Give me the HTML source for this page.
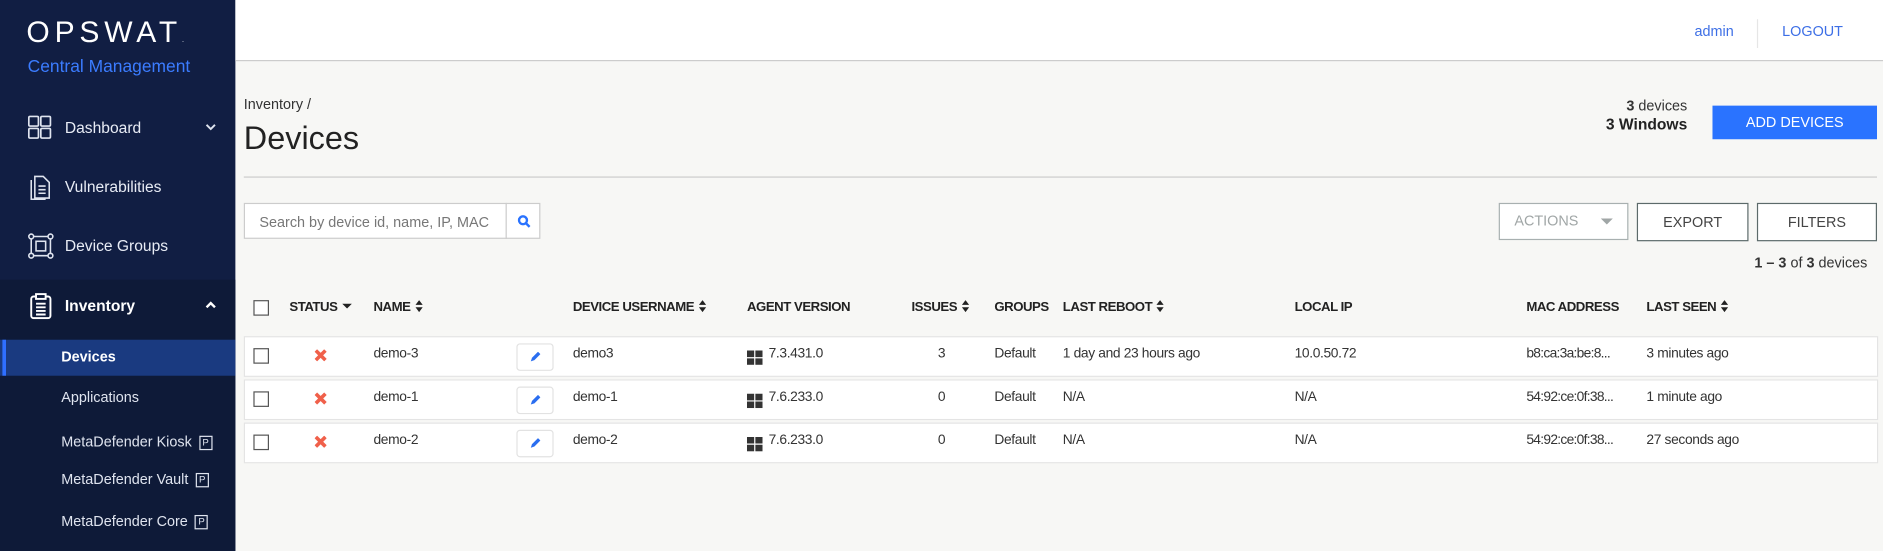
<!DOCTYPE html>
<html><head><meta charset="utf-8"><style>
html,body{margin:0;padding:0;width:1883px;height:551px;overflow:hidden;background:#f7f7f5;}
#w{position:absolute;left:0;top:0;width:1569px;height:459px;transform:scale(1.2009,1.2004);transform-origin:0 0;font-family:"Liberation Sans",sans-serif;color:#333;}
.a{position:absolute;white-space:nowrap;}
#sb{position:absolute;left:0;top:0;width:196px;height:459px;background:#111e43;}
#sb2{position:absolute;left:0;top:233px;width:196px;height:226px;background:#0e1a38;}
.mi{color:#e8ecf5;font-size:13px;}
.sub{color:#dfe4ef;font-size:12px;}
.p{display:inline-block;border:1px solid #dfe4ef;font-size:8px;width:9px;height:10px;line-height:10px;text-align:center;margin-left:6px;vertical-align:1px;}
.th{font-size:11px;font-weight:bold;color:#222;letter-spacing:-0.4px;}
.row{position:absolute;left:203px;width:1359px;height:32px;background:#fff;border:1px solid #e4e4e4;}
.td{font-size:11.5px;color:#333;letter-spacing:-0.3px;}
.cb{position:absolute;width:11px;height:11px;border:1.5px solid #555;background:#fff;}
.btn{position:absolute;border:1px solid #5c6a6a;background:#fff;font-size:12px;color:#444;text-align:center;box-sizing:border-box;}
.s{display:inline-block;width:6px;height:10px;vertical-align:-1px;margin-left:4px;}
</style></head><body><div id="w">
<div id="sb"></div><div id="sb2"></div>
<div class="a" style="left:22px;top:13px;font-size:25px;color:#fff;letter-spacing:4px;">OPSWAT<span style="font-size:6px;letter-spacing:0">.</span></div>
<div class="a" style="left:23px;top:48px;font-size:14.5px;color:#3b7cff;">Central Management</div>
<svg class="a" style="left:23px;top:96px" width="20" height="20" fill="none" stroke="#dfe4ef" stroke-width="1.4"><rect x="1" y="1" width="8" height="8" rx="1"/><rect x="11" y="1" width="8" height="8" rx="1"/><rect x="1" y="11" width="8" height="8" rx="1"/><rect x="11" y="11" width="8" height="8" rx="1"/></svg>
<div class="a mi" style="left:54px;top:99px">Dashboard</div>
<svg class="a" style="left:171px;top:103px" width="9" height="6" fill="none" stroke="#dfe4ef" stroke-width="1.6"><path d="M1 1l3.5 3.5L8 1"/></svg>
<svg class="a" style="left:25px;top:145px" width="18" height="22" fill="none" stroke="#dfe4ef" stroke-width="1.3"><path d="M4 2h7l5 5v13H4z M1 5v16h12 M7 10h6 M7 13h6 M7 16h6"/></svg>
<div class="a mi" style="left:54px;top:148px">Vulnerabilities</div>
<svg class="a" style="left:23px;top:194px" width="22" height="22" fill="none" stroke="#dfe4ef" stroke-width="1.3"><circle cx="3" cy="3" r="2"/><circle cx="19" cy="3" r="2"/><circle cx="3" cy="19" r="2"/><circle cx="19" cy="19" r="2"/><path d="M5 3h12M5 19h12M3 5v12M19 5v12"/><rect x="7" y="7" width="8" height="8"/></svg>
<div class="a mi" style="left:54px;top:197px">Device Groups</div>
<svg class="a" style="left:25px;top:244px" width="18" height="22" fill="none" stroke="#fff" stroke-width="1.6"><rect x="1" y="3" width="16" height="18" rx="2"/><rect x="5" y="1" width="8" height="4" fill="#0e1a38"/><path d="M5 9h8M5 12h8M5 15h8M5 18h8"/></svg>
<div class="a mi" style="left:54px;top:247px;font-weight:bold;color:#fff">Inventory</div>
<svg class="a" style="left:171px;top:251px" width="9" height="6" fill="none" stroke="#fff" stroke-width="2"><path d="M1 5l3.5-3.5L8 5"/></svg>
<div class="a" style="left:0;top:283px;width:196px;height:30px;background:#1a3a80;"></div>
<div class="a" style="left:2px;top:283px;width:3px;height:30px;background:#2f6fff;"></div>
<div class="a sub" style="left:51px;top:290px;font-weight:bold;color:#fff">Devices</div>
<div class="a sub" style="left:51px;top:324px">Applications</div>
<div class="a sub" style="left:51px;top:361px">MetaDefender Kiosk<span class="p">P</span></div>
<div class="a sub" style="left:51px;top:392px">MetaDefender Vault<span class="p">P</span></div>
<div class="a sub" style="left:51px;top:427px">MetaDefender Core<span class="p">P</span></div>

<div class="a" style="left:196px;top:0;width:1373px;height:50px;background:#fff;border-bottom:1px solid #ccc;"></div>
<div class="a" style="left:1411px;top:19px;font-size:12px;color:#3d6fe6">admin</div>
<div class="a" style="left:1463px;top:16px;width:1px;height:24px;background:#e6e6e6"></div>
<div class="a" style="left:1484px;top:19px;font-size:12px;color:#3d6fe6">LOGOUT</div>

<div class="a" style="left:203px;top:80px;font-size:12px;color:#333">Inventory /</div>
<div class="a" style="left:203px;top:100px;font-size:27px;color:#222">Devices</div>
<div class="a" style="left:203px;top:147px;width:1360px;height:1px;background:#ccc"></div>
<div class="a" style="left:1300px;top:81px;width:105px;text-align:right;font-size:12px;color:#333"><b>3</b> devices</div>
<div class="a" style="left:1300px;top:96px;width:105px;text-align:right;font-size:13px;color:#222;font-weight:bold">3 Windows</div>
<div class="a" style="left:1426px;top:88px;width:137px;height:28px;background:#2a73ff;color:#fff;font-size:12px;text-align:center;line-height:28px">ADD DEVICES</div>

<div class="a" style="left:203px;top:169px;width:247px;height:30px;background:#fff;border:1px solid #ccc;box-sizing:border-box"></div>
<div class="a" style="left:421px;top:169px;width:1px;height:30px;background:#ccc"></div>
<div class="a" style="left:216px;top:178px;font-size:12px;color:#777">Search by device id, name, IP, MAC</div>
<svg class="a" style="left:431px;top:179px" width="11" height="11" fill="none" stroke="#2a73ff" stroke-width="2"><circle cx="4.5" cy="4.5" r="3.3"/><path d="M7 7l3 3"/></svg>

<div class="btn" style="left:1248px;top:169px;width:108px;height:31px;border-color:#a8b0b0;color:#a0a6a6;line-height:29px;text-align:left;padding-left:12px">ACTIONS<span style="position:absolute;right:12px;top:12px;border:5px solid transparent;border-top:5px solid #a0a6a6"></span></div>
<div class="btn" style="left:1363px;top:169px;width:93px;height:32px;line-height:30px">EXPORT</div>
<div class="btn" style="left:1463px;top:169px;width:100px;height:32px;line-height:30px">FILTERS</div>
<div class="a" style="left:1400px;top:212px;width:155px;text-align:right;font-size:12px;color:#333"><b>1 – 3</b> of <b>3</b> devices</div>

<div class="cb" style="left:211px;top:250px"></div>
<div class="a th" style="left:241px;top:250px">STATUS<svg class="s" style="width:8px" viewBox="0 0 8 10"><path d="M0 3h8L4 7z" fill="#222"/></svg></div>
<div class="a th" style="left:311px;top:250px">NAME<svg class="s" viewBox="0 0 6 10"><path d="M0 4h6L3 0zM0 6h6L3 10z" fill="#222"/></svg></div>
<div class="a th" style="left:477px;top:250px">DEVICE USERNAME<svg class="s" viewBox="0 0 6 10"><path d="M0 4h6L3 0zM0 6h6L3 10z" fill="#222"/></svg></div>
<div class="a th" style="left:622px;top:250px">AGENT VERSION</div>
<div class="a th" style="left:759px;top:250px">ISSUES<svg class="s" viewBox="0 0 6 10"><path d="M0 4h6L3 0zM0 6h6L3 10z" fill="#222"/></svg></div>
<div class="a th" style="left:828px;top:250px">GROUPS</div>
<div class="a th" style="left:885px;top:250px">LAST REBOOT<svg class="s" viewBox="0 0 6 10"><path d="M0 4h6L3 0zM0 6h6L3 10z" fill="#222"/></svg></div>
<div class="a th" style="left:1078px;top:250px">LOCAL IP</div>
<div class="a th" style="left:1271px;top:250px">MAC ADDRESS</div>
<div class="a th" style="left:1371px;top:250px">LAST SEEN<svg class="s" viewBox="0 0 6 10"><path d="M0 4h6L3 0zM0 6h6L3 10z" fill="#222"/></svg></div>

<div class="row" style="top:280px"></div>
<div class="row" style="top:316px"></div>
<div class="row" style="top:352px"></div>

<div class="cb" style="left:211px;top:290px"></div>
<div class="cb" style="left:211px;top:326px"></div>
<div class="cb" style="left:211px;top:362px"></div>

<svg class="a" style="left:262px;top:291px" width="10" height="10" stroke="#f0604a" stroke-width="3"><path d="M1 1l8 8M9 1L1 9"/></svg>
<svg class="a" style="left:262px;top:327px" width="10" height="10" stroke="#f0604a" stroke-width="3"><path d="M1 1l8 8M9 1L1 9"/></svg>
<svg class="a" style="left:262px;top:363px" width="10" height="10" stroke="#f0604a" stroke-width="3"><path d="M1 1l8 8M9 1L1 9"/></svg>

<div class="a td" style="left:311px;top:289px">demo-3</div>
<div class="a td" style="left:311px;top:325px">demo-1</div>
<div class="a td" style="left:311px;top:361px">demo-2</div>

<div class="a" style="left:430px;top:286px;width:29px;height:21px;border:1px solid #e2e2e2;border-radius:3px;background:#fff;"><svg style="position:absolute;left:10px;top:6px" width="9" height="9"><path d="M1 8l1-3 5-5 2 2-5 5z" fill="#2a6ef0"/></svg></div>
<div class="a" style="left:430px;top:322px;width:29px;height:21px;border:1px solid #e2e2e2;border-radius:3px;background:#fff;"><svg style="position:absolute;left:10px;top:6px" width="9" height="9"><path d="M1 8l1-3 5-5 2 2-5 5z" fill="#2a6ef0"/></svg></div>
<div class="a" style="left:430px;top:358px;width:29px;height:21px;border:1px solid #e2e2e2;border-radius:3px;background:#fff;"><svg style="position:absolute;left:10px;top:6px" width="9" height="9"><path d="M1 8l1-3 5-5 2 2-5 5z" fill="#2a6ef0"/></svg></div>

<div class="a td" style="left:477px;top:289px">demo3</div>
<div class="a td" style="left:477px;top:325px">demo-1</div>
<div class="a td" style="left:477px;top:361px">demo-2</div>

<svg class="a" style="left:622px;top:291px" width="13" height="13" fill="#333"><path d="M0 1h6v5.5H0zM7 1h6v5.5H7zM0 7.5h6V13H0zM7 7.5h6V13H7z"/></svg>
<svg class="a" style="left:622px;top:327px" width="13" height="13" fill="#333"><path d="M0 1h6v5.5H0zM7 1h6v5.5H7zM0 7.5h6V13H0zM7 7.5h6V13H7z"/></svg>
<svg class="a" style="left:622px;top:363px" width="13" height="13" fill="#333"><path d="M0 1h6v5.5H0zM7 1h6v5.5H7zM0 7.5h6V13H0zM7 7.5h6V13H7z"/></svg>
<div class="a td" style="left:640px;top:289px">7.3.431.0</div>
<div class="a td" style="left:640px;top:325px">7.6.233.0</div>
<div class="a td" style="left:640px;top:361px">7.6.233.0</div>

<div class="a td" style="left:781px;top:289px">3</div>
<div class="a td" style="left:781px;top:325px">0</div>
<div class="a td" style="left:781px;top:361px">0</div>

<div class="a td" style="left:828px;top:289px">Default</div>
<div class="a td" style="left:828px;top:325px">Default</div>
<div class="a td" style="left:828px;top:361px">Default</div>

<div class="a td" style="left:885px;top:289px">1 day and 23 hours ago</div>
<div class="a td" style="left:885px;top:325px">N/A</div>
<div class="a td" style="left:885px;top:361px">N/A</div>

<div class="a td" style="left:1078px;top:289px">10.0.50.72</div>
<div class="a td" style="left:1078px;top:325px">N/A</div>
<div class="a td" style="left:1078px;top:361px">N/A</div>

<div class="a td" style="left:1271px;top:289px;letter-spacing:-0.6px">b8:ca:3a:be:8...</div>
<div class="a td" style="left:1271px;top:325px;letter-spacing:-0.6px">54:92:ce:0f:38...</div>
<div class="a td" style="left:1271px;top:361px;letter-spacing:-0.6px">54:92:ce:0f:38...</div>

<div class="a td" style="left:1371px;top:289px">3 minutes ago</div>
<div class="a td" style="left:1371px;top:325px">1 minute ago</div>
<div class="a td" style="left:1371px;top:361px">27 seconds ago</div>
</div></body></html>
